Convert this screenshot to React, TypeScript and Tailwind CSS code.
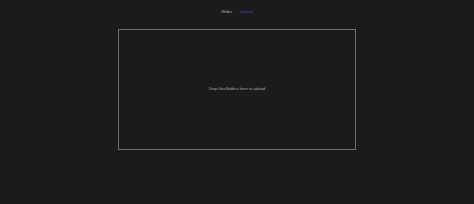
export default function App() {
  return (
    <div className="min-h-screen w-full bg-[#1b1b1b] font-[family-name:'Liberation_Sans',Arial,sans-serif]">
      <nav className="flex justify-center items-center gap-[8px] pt-[9px] h-[15px] text-[4px]">
        <span className="text-[#b4b4b4]">Slides</span>
        <span className="text-[#5a40b8]">Upload</span>
      </nav>
      <div className="flex justify-center pt-[14px]">
        <div className="w-[238px] h-[121px] border border-[#707070] flex items-center justify-center">
          <p className="text-[4px] text-[#a8a8a8] pb-[1px]">Drop files/folders here to upload</p>
        </div>
      </div>
    </div>
  );
}
